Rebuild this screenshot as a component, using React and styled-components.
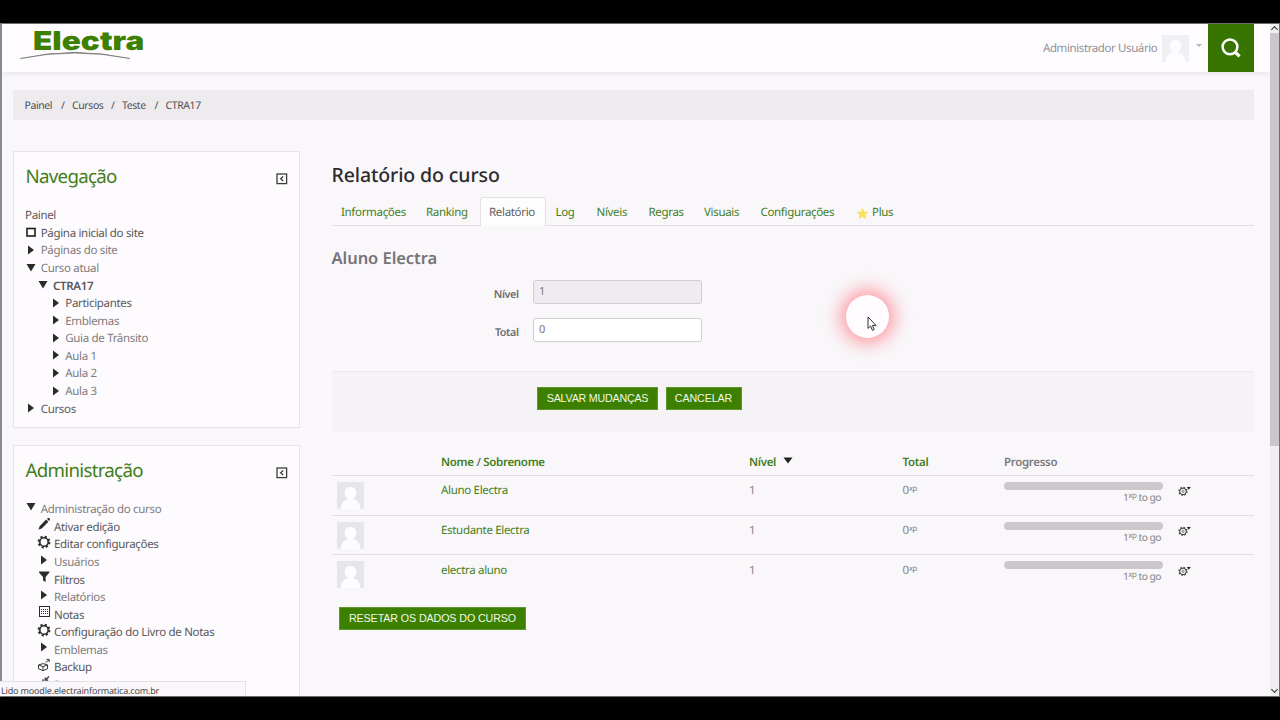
import React from "react";
import styled, { createGlobalStyle, css } from "styled-components";

const navigation = [
  { label: "Painel", level: 0, icon: null, dark: true },
  { label: "Página inicial do site", level: 0, icon: "square", dark: true },
  { label: "Páginas do site", level: 0, icon: "right" },
  { label: "Curso atual", level: 0, icon: "down" },
  { label: "CTRA17", level: 1, icon: "down", strong: true },
  { label: "Participantes", level: 2, icon: "right", dark: true },
  { label: "Emblemas", level: 2, icon: "right" },
  { label: "Guia de Trânsito", level: 2, icon: "right" },
  { label: "Aula 1", level: 2, icon: "right" },
  { label: "Aula 2", level: 2, icon: "right" },
  { label: "Aula 3", level: 2, icon: "right" },
  { label: "Cursos", level: 0, icon: "right", dark: true },
];

const administration = [
  { label: "Ativar edição", icon: "pencil", dark: true },
  { label: "Editar configurações", icon: "gear", dark: true },
  { label: "Usuários", icon: "right" },
  { label: "Filtros", icon: "filter", dark: true },
  { label: "Relatórios", icon: "right" },
  { label: "Notas", icon: "grid", dark: true },
  { label: "Configuração do Livro de Notas", icon: "gear", dark: true },
  { label: "Emblemas", icon: "right" },
  { label: "Backup", icon: "backup", dark: true },
  { label: "Restaurar", icon: "restore", dark: true },
];

const tabs = [
  { label: "Informações", width: 85 },
  { label: "Ranking", width: 63 },
  { label: "Relatório", width: 66.5, active: true },
  { label: "Log", width: 41 },
  { label: "Níveis", width: 52 },
  { label: "Regras", width: 55.5 },
  { label: "Visuais", width: 56.5 },
  { label: "Configurações", width: 95 },
  { label: "Plus", width: 56, star: true },
];

const students = ["Aluno Electra", "Estudante Electra", "electra aluno"];

const icons = {
  square: <rect x="4" y="4.5" width="8" height="7.5" fill="none" stroke="#1c1c1c" strokeWidth="1.6" />,
  right: <path d="M5 3.6 L11 8 L5 12.4Z" />,
  down: <path d="M3.5 4 H12.5 L8 11.4Z" />,
  pencil: <path d="M2.5 13.5 L3.6 10.2 L10.2 3.6 L12.4 5.8 L5.8 12.4Z M11 2.8 L12 1.9 Q12.7 1.5 13.4 2.3 Q14.4 3.2 13.8 4 L13.1 4.9Z" />,
  gear: (
    <>
      <circle cx="8" cy="8" r="5.4" fill="none" stroke="#2b2b2b" strokeWidth="2" strokeDasharray="2.12 2.12" />
      <circle cx="8" cy="8" r="4.2" fill="none" stroke="#2b2b2b" strokeWidth="1.6" />
    </>
  ),
  filter: <path d="M3 2.4 H13.4 V3.6 L9.6 8 V13 L7 11.6 V8 L3 3.6Z" />,
  grid: (
    <>
      <rect x="3.5" y="2.5" width="10" height="10" fill="none" stroke="#2b2b2b" />
      <path d="M5 5.5 H12 M5 7.5 H12 M5 9.5 H12" stroke="#2b2b2b" strokeDasharray="1 1" />
    </>
  ),
  backup: (
    <path
      d="M2.5 8 L7 6.6 L11.5 8 L7 9.6Z V11.8 L7 13.6 L11.5 11.8 V8 M7 9.6 V13.6 M9.5 6 L13 2.6 M10.5 2.4 H13.2 V5"
      fill="none"
      stroke="#3a3a3a"
    />
  ),
  restore: <path d="M13 1.5 L9.5 5 M9.3 2.4 V5.2 H12.2 M6 5.2 H8.2" fill="none" stroke="#3a3a3a" strokeWidth="1.2" />,
};

function Icon({ name, size = 16 }) {
  return (
    <svg width={size} height={size} viewBox="0 0 16 16" fill="#2b2b2b">
      {icons[name]}
    </svg>
  );
}

function Avatar({ size }) {
  return (
    <svg width={size} height={size} viewBox="0 0 27 27">
      <rect width="27" height="27" fill="#e6e5e7" />
      <path d="M3.5 27 Q4 18.5 11 17 Q7.6 14.5 7.6 10.8 Q8 5 13.5 5 Q19 5 19.4 10.8 Q19.4 14.5 16 17 Q23 18.5 23.5 27Z" fill="#fdfcfe" />
    </svg>
  );
}

function DockIcon() {
  return (
    <svg width="12" height="12" viewBox="0 0 12 12" fill="none" stroke="#3d3d3d">
      <rect x="1" y="1" width="9.6" height="9.6" strokeWidth="1.3" />
      <path d="M7.2 3.6 L4.7 5.8 L7.2 8" strokeWidth="1.3" />
    </svg>
  );
}

function CogMenu() {
  return (
    <svg width="14" height="12" viewBox="0 0 14 12">
      <circle cx="5" cy="6.4" r="4" fill="none" stroke="#444" strokeWidth="1.2" strokeDasharray="1.57 1.57" />
      <circle cx="5" cy="6.4" r="3.3" fill="none" stroke="#333" strokeWidth="1" />
      <circle cx="5" cy="6.4" r="1.1" fill="none" stroke="#555" strokeWidth="0.7" />
      <path d="M8.8 2 H12.8 L10.8 4.8Z" fill="#222" />
    </svg>
  );
}

export default function App() {
  return (
    <Letterbox>
      <GlobalStyle />
      <Window>
        <Viewport>
          <Header>
            <Logo>
              <LogoText>Electra</LogoText>
              <svg width="112" height="8" viewBox="0 0 112 8">
                <path d="M0.5 6.5 Q54 -5.5 110 6.5 Q54 -4.3 0.5 6.5Z" fill="#444" stroke="#555" strokeWidth="0.5" />
              </svg>
            </Logo>
            <UserMenu>
              <UserName>Administrador Usuário</UserName>
              <FadedAvatar>
                <Avatar size={27} />
              </FadedAvatar>
              <Caret />
              <SearchButton>
                <svg width="22" height="22" viewBox="0 0 22 22" fill="none" stroke="#fff">
                  <circle cx="10" cy="9.8" r="7.4" strokeWidth="2.5" />
                  <path d="M15 15 L19.6 19.4" strokeWidth="3.2" />
                </svg>
              </SearchButton>
            </UserMenu>
          </Header>

          <Breadcrumb>
            <Crumb $width={36.5}>Painel</Crumb>
            <Slash>/</Slash>
            <Crumb $width={39}>Cursos</Crumb>
            <Slash>/</Slash>
            <Crumb $width={32.5}>Teste</Crumb>
            <Slash>/</Slash>
            <Crumb $width={50}>CTRA17</Crumb>
          </Breadcrumb>

          <Columns>
            <Sidebar>
              <Block $height={277}>
                <BlockHeader>
                  <BlockTitle>Navegação</BlockTitle>
                  <DockIcon />
                </BlockHeader>
                <Tree>
                  {navigation.map((item) => (
                    <TreeItem key={item.label} $level={item.level} $dark={item.dark} $strong={item.strong}>
                      {item.icon && (
                        <TreeIcon>
                          <Icon name={item.icon} />
                        </TreeIcon>
                      )}
                      {item.label}
                    </TreeItem>
                  ))}
                </Tree>
              </Block>
              <Block $height={300}>
                <BlockHeader>
                  <BlockTitle>Administração</BlockTitle>
                  <DockIcon />
                </BlockHeader>
                <Tree>
                  <TreeItem $level={0}>
                    <TreeIcon $raised>
                      <Icon name="down" />
                    </TreeIcon>
                    Administração do curso
                  </TreeItem>
                  {administration.map((item) => (
                    <TreeItem key={item.label} $level={1} $dark={item.dark}>
                      <TreeIcon $raised $wide>
                        <Icon name={item.icon} />
                      </TreeIcon>
                      {item.label}
                    </TreeItem>
                  ))}
                </Tree>
              </Block>
            </Sidebar>

            <Main>
              <PageTitle>Relatório do curso</PageTitle>
              <TabBar>
                {tabs.map(({ label, width, active, star }) => (
                  <Tab key={label} $width={width} $active={active}>
                    {star && (
                      <svg width="16.5" height="14" viewBox="0 0 16.5 14">
                        <path d="M6.5 1.7 L8.3 5.5 L12.5 5.9 L9.4 8.7 L10.3 13.1 L6.5 10.9 L2.7 13.1 L3.6 8.7 L0.5 5.9 L4.7 5.5Z" fill="#fbe15f" />
                      </svg>
                    )}
                    {label}
                  </Tab>
                ))}
              </TabBar>
              <StudentTitle>Aluno Electra</StudentTitle>
              <Field>
                <Label>Nível</Label>
                <Input defaultValue="1" disabled />
              </Field>
              <Field>
                <Label>Total</Label>
                <Input defaultValue="0" />
              </Field>
              <Actions>
                <Button $width={121} $tight>
                  SALVAR MUDANÇAS
                </Button>
                <Button $width={76}>CANCELAR</Button>
              </Actions>

              <TableHead>
                <span />
                <span>
                  Nome <Divider>/</Divider> Sobrenome
                </span>
                <Sortable>
                  Nível
                  <svg width="10" height="10" viewBox="0 0 10 10">
                    <path d="M0.5 0.6 H9.5 L5 6.6Z" fill="#222" />
                  </svg>
                </Sortable>
                <span>Total</span>
                <Muted>Progresso</Muted>
              </TableHead>
              {students.map((name) => (
                <Row key={name}>
                  <AvatarCell>
                    <Avatar size={27} />
                  </AvatarCell>
                  <Name>{name}</Name>
                  <Value>1</Value>
                  <Value>
                    0<Xp>xp</Xp>
                  </Value>
                  <Progress>
                    <Bar />
                    <Remaining>
                      1<Xp>xp</Xp> to go
                    </Remaining>
                  </Progress>
                  <CogCell>
                    <CogMenu />
                  </CogCell>
                </Row>
              ))}
              <ResetRow>
                <Button $width={187}>RESETAR OS DADOS DO CURSO</Button>
              </ResetRow>
            </Main>
          </Columns>
        </Viewport>
        <Scrollbar>
          <ScrollArrow $up />
          <Thumb />
          <ScrollArrow />
        </Scrollbar>
      </Window>

      <StatusBar>Lido moodle.electrainformatica.com.br</StatusBar>
      <Highlight />
      <Pointer width="10" height="16" viewBox="0 0 10 16">
        <path d="M1 1 V12.4 L3.6 10 L5.4 14.4 L7.2 13.6 L5.4 9.4 H9Z" fill="#fff" stroke="#333" strokeWidth="1" />
      </Pointer>
    </Letterbox>
  );
}

const green = "#437e1c";
const buttonGreen = "#3d8000";

const GlobalStyle = createGlobalStyle`
  * {
    box-sizing: border-box;
  }

  body {
    margin: 0;
    overflow: hidden;
    background: #000;
    font-family: "Noto Sans", sans-serif;
    font-size: 11.5px;
    letter-spacing: -0.32px;
    text-rendering: geometricPrecision;
    color: #6f6e70;
  }

  svg {
    display: block;
    flex: none;
  }
`;

const Letterbox = styled.div`
  position: relative;
  width: 1280px;
  height: 720px;
  padding: 23px 0;
  background: #000;
`;

const Window = styled.div`
  display: flex;
  height: 674px;
  overflow: hidden;
  border: 1px solid #6e6d6f;
  border-left: 2px solid #8a898b;
  background: #f9f7fa;
`;

const Viewport = styled.div`
  width: 1268px;
  flex: none;
  height: 672px;
  overflow: hidden;
`;

const Header = styled.header`
  display: flex;
  justify-content: space-between;
  height: 48px;
  padding: 0 16px 0 18px;
  background: #fefcfe;
  box-shadow: 0 1px 6px rgba(0, 0, 0, 0.1);
`;

const Logo = styled.div`
  padding-top: 3px;
`;

const LogoText = styled.div`
  width: 110px;
  height: 25px;
  padding-left: 13px;
  font-family: Inter, "Liberation Sans", sans-serif;
  font-size: 26px;
  font-weight: 900;
  line-height: 29px;
  letter-spacing: 0;
  color: ${buttonGreen};
  transform: scaleX(1.215);
  transform-origin: 13px 0;
`;

const UserMenu = styled.div`
  display: flex;
  align-items: center;
`;

const UserName = styled.span`
  width: 119px;
  padding-top: 1px;
  letter-spacing: -0.4px;
  white-space: nowrap;
  color: #929194;
`;

const FadedAvatar = styled.div`
  opacity: 0.55;
`;

const Caret = styled.span`
  margin: 0 6px 5px 7px;
  border: 3px solid transparent;
  border-top-color: #b5b4b6;
  border-bottom: 0;
`;

const SearchButton = styled.div`
  display: flex;
  align-items: center;
  justify-content: center;
  width: 46px;
  height: 48px;
  background: #377400;
`;

const Breadcrumb = styled.nav`
  display: flex;
  align-items: center;
  height: 30px;
  margin: 18px 16px 0 11px;
  padding: 1px 0 0 11.5px;
  background: #edebee;
  font-size: 10.5px;
  letter-spacing: -0.4px;
  color: #4f4e51;
`;

const Crumb = styled.span`
  width: ${({ $width }) => $width}px;
  white-space: nowrap;
`;

const Slash = styled.span`
  width: 11px;
`;

const Columns = styled.div`
  display: flex;
  gap: 31.5px;
  margin: 31px 16px 0 11px;
`;

const Sidebar = styled.aside`
  width: 287px;
  flex: none;
`;

const Block = styled.section`
  height: ${({ $height }) => $height}px;
  margin-bottom: 17px;
  padding: 10px 11px;
  border: 1px solid #e6e4e7;
  background: #fdfbfd;
`;

const BlockHeader = styled.div`
  display: flex;
  align-items: center;
  justify-content: space-between;
  height: 31px;
  margin-bottom: 14px;

  svg {
    margin-top: 3px;
  }
`;

const BlockTitle = styled.h2`
  margin: -1.5px 0 0 0.5px;
  font-size: 18.7px;
  font-weight: 400;
  letter-spacing: -0.7px;
  color: ${green};
`;

const Tree = styled.div`
  display: flex;
  flex-direction: column;
`;

const TreeItem = styled.div`
  display: flex;
  align-items: center;
  height: 17.58px;
  padding-left: ${({ $level }) => $level * 12.3}px;
  white-space: nowrap;
  color: ${({ $dark }) => ($dark ? "#59585b" : "#7d7c7f")};
  ${({ $strong }) =>
    $strong &&
    css`
      font-weight: 600;
      color: #59585b;
    `}
`;

const TreeIcon = styled.span`
  width: 17.7px;
  margin-left: ${({ $wide }) => ($wide ? -1 : -2)}px;
  margin-top: ${({ $raised }) => ($raised ? -6 : -2)}px;
`;

const Main = styled.main`
  width: 922.5px;
`;

const PageTitle = styled.h1`
  height: 46px;
  margin: 0;
  padding-top: 7.5px;
  font-size: 19.5px;
  font-weight: 500;
  letter-spacing: -0.12px;
  line-height: 31px;
  color: #2c2b2e;
`;

const TabBar = styled.div`
  display: flex;
  height: 29px;
  border-bottom: 1px solid #e2e0e3;
`;

const Tab = styled.div`
  display: flex;
  align-items: center;
  width: ${({ $width }) => $width}px;
  height: 29px;
  padding: 1px 0 0 8.5px;
  border: 1px solid transparent;
  border-bottom: 0;
  white-space: nowrap;
  color: ${green};
  ${({ $active }) =>
    $active &&
    css`
      border-color: #e2e0e3;
      border-radius: 3px 3px 0 0;
      background: #fefdfe;
      color: #5f5e61;
    `}
`;

const StudentTitle = styled.h3`
  height: 54px;
  margin: 0;
  padding-top: 19px;
  font-size: 16.5px;
  font-weight: 600;
  letter-spacing: -0.05px;
  line-height: 26px;
  color: #757477;
`;

const Field = styled.label`
  display: flex;
  gap: 14.5px;
  height: 38px;
`;

const Label = styled.span`
  width: 187px;
  padding-top: 6.5px;
  text-align: right;
  font-size: 10.8px;
  font-weight: 600;
  letter-spacing: -0.45px;
`;

const Input = styled.input`
  width: 169px;
  height: 23.5px;
  padding: 0 5px 2px;
  border: 1px solid #cfcdd0;
  border-radius: 3px;
  background: #fff;
  font: 11px "Noto Sans", sans-serif;
  color: #7b7a7d;

  &:disabled {
    background: #eeecee;
  }
`;

const Actions = styled.div`
  display: flex;
  gap: 7.5px;
  height: 61px;
  margin-top: 15.4px;
  padding: 14.6px 0 0 205.5px;
  border-top: 1px solid #ebe9ec;
  background: #f5f3f5;
`;

const Button = styled.button`
  width: ${({ $width }) => $width}px;
  height: 23px;
  padding: 0 0 1px;
  border: 1px solid #5d9530;
  background: ${buttonGreen};
  font-family: "Liberation Sans", Arial, sans-serif;
  font-size: 10.7px;
  letter-spacing: ${({ $tight }) => ($tight ? -0.22 : -0.1)}px;
  white-space: nowrap;
  color: #f2f8ec;
`;

const columns = css`
  display: grid;
  grid-template-columns: 104px 308px 153.5px 101.5px 174px 1fr;
  padding-left: 5.5px;
`;

const TableHead = styled.div`
  ${columns}
  align-items: center;
  height: 27px;
  margin-top: 15.5px;
  padding-top: 2px;
  font-weight: 600;
  color: ${green};
`;

const Divider = styled.span`
  color: #6f6e70;
`;

const Sortable = styled.span`
  display: flex;
  align-items: center;
  gap: 7px;
`;

const Muted = styled.span`
  color: #7b7a7d;
`;

const Row = styled.div`
  ${columns}
  height: 39.8px;
  border-top: 1px solid #e2e0e3;
`;

const AvatarCell = styled.div`
  padding-top: 6px;
`;

const Name = styled.span`
  padding-top: 7.2px;
  color: ${green};
`;

const Value = styled.span`
  padding-top: 7.2px;
  color: #858487;
`;

const Xp = styled.sup`
  font-size: 8px;
  letter-spacing: -0.5px;
  line-height: 0;
  vertical-align: 3px;
`;

const Progress = styled.div`
  width: 159px;
  padding-top: 6px;
`;

const Bar = styled.div`
  height: 8px;
  border-radius: 4px;
  background: #cac8ca;
`;

const Remaining = styled.div`
  padding-right: 2px;
  text-align: right;
  font-size: 10.3px;
  letter-spacing: -0.55px;
  line-height: 16px;
  color: #858487;
`;

const CogCell = styled.div`
  padding-top: 9.5px;
`;

const ResetRow = styled.div`
  padding: 12.7px 0 0 7.5px;
`;

const Scrollbar = styled.div`
  display: flex;
  flex-direction: column;
  align-items: center;
  width: 9px;
  flex: none;
  background: #f0eef0;
`;

const Thumb = styled.div`
  width: 9px;
  height: 413px;
  margin-bottom: auto;
  background: #c9c7c9;
`;

const ScrollArrow = styled.span`
  width: 5px;
  height: 5px;
  margin: ${({ $up }) => ($up ? "3px 0 1px" : "0 0 4px")};
  border: solid #333;
  border-width: ${({ $up }) => ($up ? "1.5px 0 0 1.5px" : "0 1.5px 1.5px 0")};
  transform: rotate(45deg);
`;

const StatusBar = styled.div`
  position: absolute;
  left: 0;
  top: 681px;
  width: 246px;
  height: 15px;
  padding-left: 1px;
  border: 1px solid #e3e1e4;
  border-width: 1px 1px 0 0;
  background: #f9f7fa;
  font-size: 9px;
  letter-spacing: -0.17px;
  line-height: 17px;
  white-space: nowrap;
  color: #4a494c;
`;

const Highlight = styled.div`
  position: absolute;
  left: 846px;
  top: 295px;
  width: 43px;
  height: 43px;
  border-radius: 50%;
  background: #fefcfe;
  box-shadow: 0 0 18px 5px rgba(255, 90, 100, 0.62);
`;

const Pointer = styled.svg`
  position: absolute;
  left: 867px;
  top: 316px;
`;
